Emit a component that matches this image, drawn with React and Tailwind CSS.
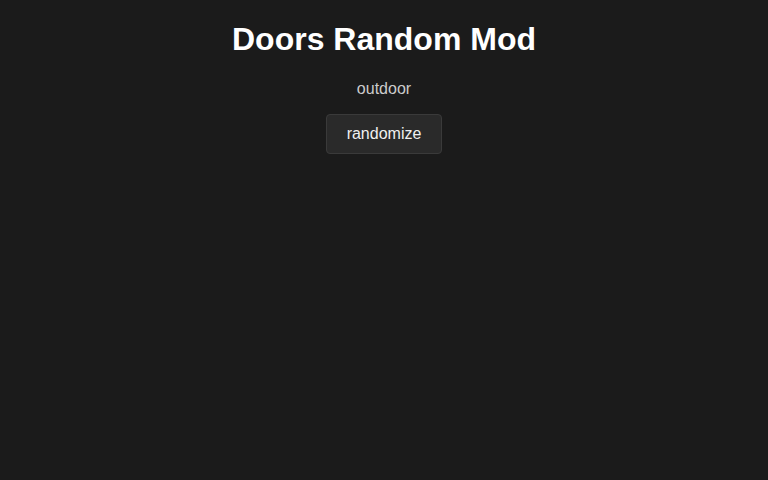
import React, { useState } from "react";

const places = ["outdoor", "hotel", "library", "courtyard", "greenhouse", "mines", "backdoor"];

const App = () => {
  const [place, setPlace] = useState("outdoor");

  const randomize = () => {
    setPlace(places[Math.floor(Math.random() * places.length)]);
  };

  return (
    <div className="min-h-screen w-full bg-[#1b1b1b] flex flex-col items-center font-['Liberation_Sans',Arial,sans-serif]">
      <h1 className="mt-[21px] text-[32px] leading-[37px] font-bold text-white">
        Doors Random Mod
      </h1>
      <p className="mt-[22px] text-base leading-[18px] text-[#cccccc]">{place}</p>
      <button
        type="button"
        onClick={randomize}
        className="mt-4 h-10 px-5 rounded border border-[#3a3a3a] bg-[#2a2a2a] text-base text-[#f0f0f0] hover:bg-[#333]"
      >
        randomize
      </button>
    </div>
  );
};

export default App;
